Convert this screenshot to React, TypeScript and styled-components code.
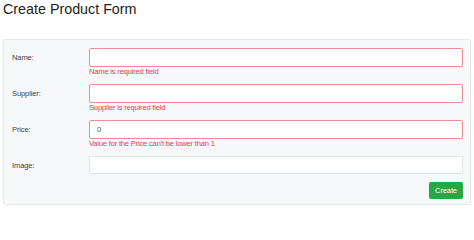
import React from "react";
import styled, { createGlobalStyle } from "styled-components";

const Global = createGlobalStyle`
  html, body { margin: 0; padding: 0; background: #ffffff; }
  body { font-family: "Liberation Sans", Arial, sans-serif; color: #212529; }
`;

const Page = styled.div`
  padding: 0 3px;
`;

const Title = styled.h3`
  margin: 0;
  font-size: 14.3px;
  line-height: 18px;
  font-weight: 400;
  color: #222;
`;

const Panel = styled.form`
  margin-top: 21px;
  background: #f7f8f9;
  border: 1px solid #e6e8ea;
  border-radius: 2px;
  padding: 8px 7px 6px 8px;
  height: 166px;
  box-sizing: border-box;
`;

const Row = styled.div`
  display: grid;
  grid-template-columns: 77px 1fr;
  margin-bottom: 7px;
`;

const Label = styled.label`
  font-size: 7.6px;
  letter-spacing: -0.15px;
  color: #444;
  height: 19px;
  display: flex;
  align-items: center;
`;

const Field = styled.div`
  display: flex;
  flex-direction: column;
`;

const Input = styled.input<{ $invalid?: boolean }>`
  box-sizing: border-box;
  width: 100%;
  height: ${(p) => (p.$invalid ? "19px" : "18px")};
  margin: 0;
  border: 1px solid ${(p) => (p.$invalid ? "#ec8e96" : "#e3e6e9")};
  border-radius: 2px;
  background: #fff;
  padding: 0 7px;
  font-family: "Liberation Sans", Arial, sans-serif;
  font-size: 7.6px;
  color: #555;
  outline: none;
`;

const Error = styled.div`
  font-size: 7.6px;
  letter-spacing: -0.2px;
  line-height: 10px;
  color: #e2414f;
`;

const Actions = styled.div`
  display: flex;
  justify-content: flex-end;
`;

const Button = styled.button`
  width: 34px;
  height: 17px;
  padding: 0;
  border: none;
  border-radius: 2px;
  background: #28a745;
  color: #fff;
  font-family: "Liberation Sans", Arial, sans-serif;
  font-size: 7.6px;
  letter-spacing: -0.15px;
`;

const fields = [
  { label: "Name:", value: "", error: "Name is required field" },
  { label: "Supplier:", value: "", error: "Supplier is required field" },
  { label: "Price:", value: "0", error: "Value for the Price can't be lower than 1" },
  { label: "Image:", value: "", error: "" },
];

export default function App() {
  return (
    <Page>
      <Global />
      <Title>Create Product Form</Title>
      <Panel onSubmit={(e) => e.preventDefault()}>
        {fields.map((f) => (
          <Row key={f.label}>
            <Label>{f.label}</Label>
            <Field>
              <Input $invalid={!!f.error} defaultValue={f.value} />
              {f.error && <Error>{f.error}</Error>}
            </Field>
          </Row>
        ))}
        <Actions>
          <Button type="submit">Create</Button>
        </Actions>
      </Panel>
    </Page>
  );
}
